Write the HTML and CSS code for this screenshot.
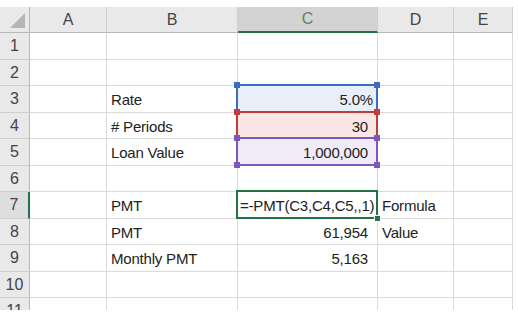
FILE: index.html
```html
<!DOCTYPE html>
<html lang="en">
<head>
    <meta charset="UTF-8">
    <meta name="viewport" content="width=device-width, initial-scale=1.0">
    <title>PMT Sheet</title>
    <link rel="stylesheet" href="styles.css">
</head>
<body>
    <div class="page">
        <div class="sheet">
            <!-- column headers -->
            <div class="hd corner"><span class="tri"></span></div>
            <div class="hd">A</div>
            <div class="hd">B</div>
            <div class="hd sel-col">C</div>
            <div class="hd">D</div>
            <div class="hd">E</div>

            <div class="rn">1</div><div class="cell"></div><div class="cell"></div><div class="cell"></div><div class="cell"></div><div class="cell"></div>
            <div class="rn">2</div><div class="cell"></div><div class="cell"></div><div class="cell"></div><div class="cell"></div><div class="cell"></div>

            <div class="rn">3</div><div class="cell"></div><div class="cell">Rate</div>
            <div class="cell num pct ref blue"><span class="h tl"></span><span class="h tr"></span>5.0%</div>
            <div class="cell"></div><div class="cell"></div>

            <div class="rn">4</div><div class="cell"></div><div class="cell"># Periods</div>
            <div class="cell num ref red"><span class="h tl"></span><span class="h tr"></span>30</div>
            <div class="cell"></div><div class="cell"></div>

            <div class="rn">5</div><div class="cell"></div><div class="cell">Loan Value</div>
            <div class="cell num ref purple"><span class="h tl"></span><span class="h tr"></span><span class="h bl"></span><span class="h br"></span>1,000,000</div>
            <div class="cell"></div><div class="cell"></div>

            <div class="rn">6</div><div class="cell"></div><div class="cell"></div><div class="cell"></div><div class="cell"></div><div class="cell"></div>

            <div class="rn sel-row">7</div><div class="cell"></div><div class="cell">PMT</div>
            <div class="cell active"><span class="fill"></span>=-PMT(C3,C4,C5,,1)</div>
            <div class="cell">Formula</div><div class="cell"></div>

            <div class="rn">8</div><div class="cell"></div><div class="cell">PMT</div>
            <div class="cell num">61,954</div>
            <div class="cell">Value</div><div class="cell"></div>

            <div class="rn">9</div><div class="cell"></div><div class="cell">Monthly PMT</div>
            <div class="cell num">5,163</div>
            <div class="cell"></div><div class="cell"></div>

            <div class="rn">10</div><div class="cell"></div><div class="cell"></div><div class="cell"></div><div class="cell"></div><div class="cell"></div>
            <div class="rn">11</div><div class="cell"></div><div class="cell"></div><div class="cell"></div><div class="cell"></div><div class="cell"></div>
        </div>
    </div>
</body>
</html>
```

FILE: styles.css
```css
body {
    margin: 0;
    padding: 0;
    background: #ffffff;
    font-family: "Liberation Sans", Arial, sans-serif;
}

.page {
    padding-top: 7px;
}

.sheet {
    display: grid;
    grid-template-columns: 30px 77px 131px 140px 76px 59px;
    grid-template-rows: 26px 27px 26px 27px 26px 27px 26px 27px 26px 27px 26px 27px;
    width: 513px;
    height: 303px;
    overflow: hidden;
}

.hd, .rn, .cell {
    box-sizing: border-box;
    position: relative;
    display: flex;
    align-items: center;
    white-space: nowrap;
}

.hd {
    background: #e9e9e9;
    color: #444444;
    font-size: 16px;
    justify-content: center;
    border-right: 1px solid #cfcfcf;
    border-bottom: 1px solid #b8b8b8;
}

.hd.corner {
    border-right: 1px solid #b8b8b8;
}

.tri {
    position: absolute;
    right: 4px;
    bottom: 4px;
    width: 0;
    height: 0;
    border-left: 15px solid transparent;
    border-bottom: 15px solid #b5b5b5;
}

.hd.sel-col {
    background: #d3d3d3;
    color: #6a7a6f;
    border-bottom: 2px solid #217346;
}

.rn {
    background: #e9e9e9;
    color: #444444;
    font-size: 16px;
    justify-content: center;
    border-right: 1px solid #b8b8b8;
    border-bottom: 1px solid #cfcfcf;
}

.rn.sel-row {
    background: #dedede;
    border-right: 2px solid #217346;
}

.cell {
    color: #222222;
    font-size: 15px;
    letter-spacing: -0.2px;
    padding-left: 4px;
    padding-top: 1px;
    border-right: 1px solid #dadada;
    border-bottom: 1px solid #dadada;
}

.cell.num {
    justify-content: flex-end;
    padding-right: 9px;
}

.cell.num.pct {
    padding-right: 4px;
}

/* formula reference ranges */
.ref::before, .active::before {
    content: "";
    position: absolute;
    left: -2px;
    top: -2px;
    right: -1px;
    bottom: -1px;
    border: 2px solid var(--c);
    pointer-events: none;
}

.ref.blue { --c: #3d6cc0; background: #e9eff9; }
.ref.red { --c: #c23b3b; background: #fbe6e6; }
.ref.purple { --c: #7b57be; background: #efebf8; }

.h {
    position: absolute;
    width: 6px;
    height: 6px;
    background: var(--c);
    z-index: 2;
}

.h.tl { left: -4px; top: -4px; }
.h.tr { right: -3px; top: -4px; }
.h.bl { left: -4px; bottom: -3px; }
.h.br { right: -3px; bottom: -3px; }

.active {
    --c: #217346;
    padding-left: 2px;
    z-index: 1;
}

.fill {
    position: absolute;
    right: -4px;
    bottom: -4px;
    width: 5px;
    height: 5px;
    background: #217346;
    border: 1px solid #ffffff;
}
```
